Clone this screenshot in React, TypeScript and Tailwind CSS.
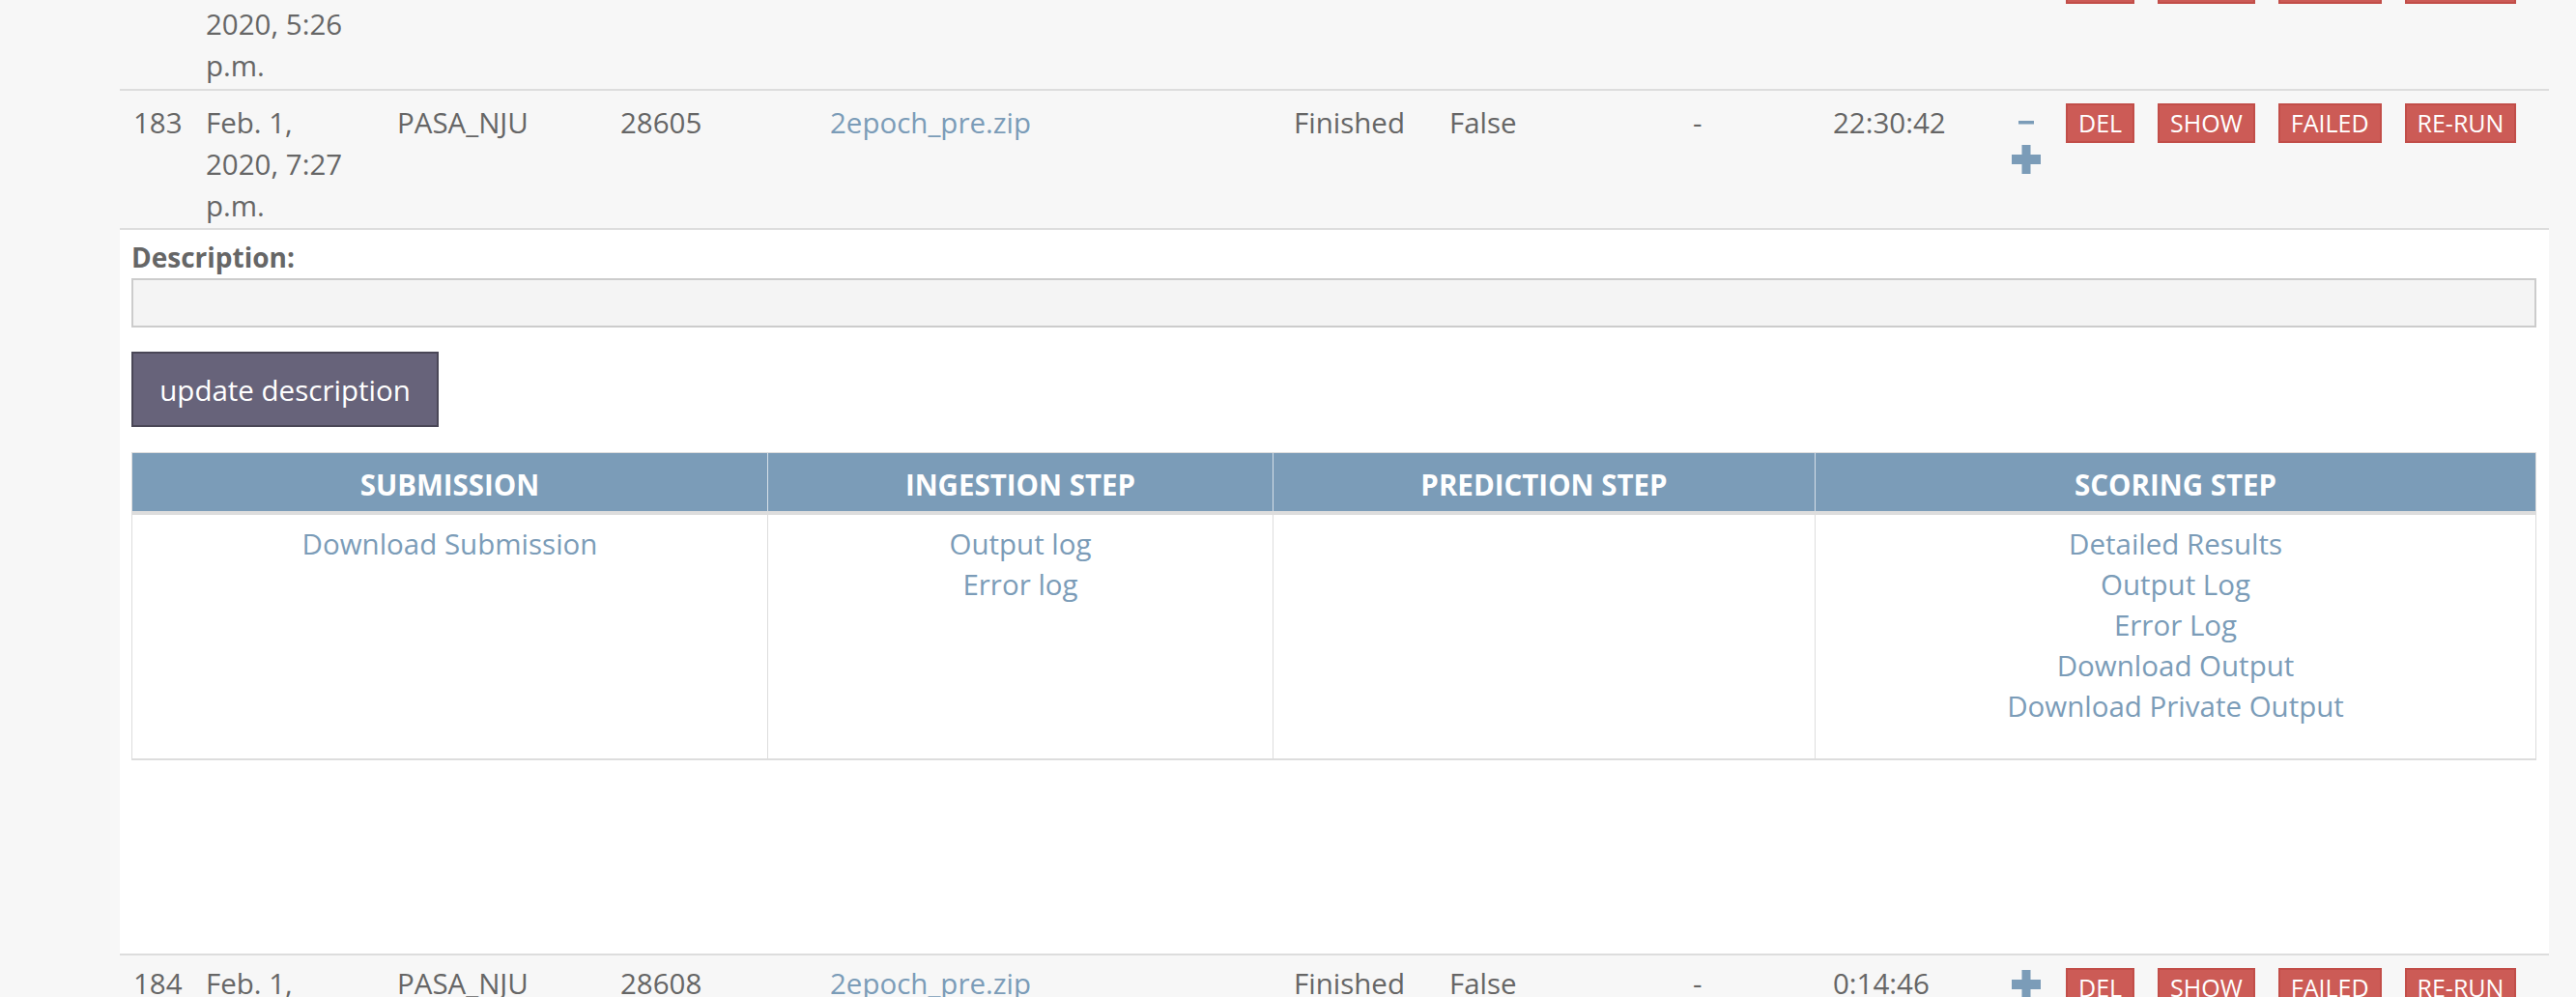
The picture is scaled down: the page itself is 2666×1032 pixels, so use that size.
import type { ReactNode } from "react";

interface SubmissionRowData {
  id: number;
  date: string;
  team: string;
  submissionId: string;
  file: string;
  status: string;
  isPublic: string;
  score: string;
  runtime: string;
}

const rowsData: SubmissionRowData[] = [
  {
    id: 182,
    date: "Feb. 1, 2020, 5:26 p.m.",
    team: "PASA_NJU",
    submissionId: "28598",
    file: "2epoch_pre.zip",
    status: "Finished",
    isPublic: "False",
    score: "-",
    runtime: "21:05:11",
  },
  {
    id: 183,
    date: "Feb. 1, 2020, 7:27 p.m.",
    team: "PASA_NJU",
    submissionId: "28605",
    file: "2epoch_pre.zip",
    status: "Finished",
    isPublic: "False",
    score: "-",
    runtime: "22:30:42",
  },
  {
    id: 184,
    date: "Feb. 1, 2020, 7:43 p.m.",
    team: "PASA_NJU",
    submissionId: "28608",
    file: "2epoch_pre.zip",
    status: "Finished",
    isPublic: "False",
    score: "-",
    runtime: "0:14:46",
  },
];

const actionButtons = ["DEL", "SHOW", "FAILED", "RE-RUN"];

const stepColumns: { title: string; width: string; links: string[] }[] = [
  { title: "Submission", width: "w-[657px]", links: ["Download Submission"] },
  { title: "Ingestion Step", width: "w-[523px]", links: ["Output log", "Error log"] },
  { title: "Prediction Step", width: "w-[561px]", links: [] },
  {
    title: "Scoring Step",
    width: "flex-1",
    links: ["Detailed Results", "Output Log", "Error Log", "Download Output", "Download Private Output"],
  },
];

function MinusIcon() {
  return (
    <svg width="16" height="4" viewBox="0 0 16 4" aria-hidden="true">
      <rect x="0" y="0" width="16" height="3.5" fill="#7b9cb8" />
    </svg>
  );
}

function PlusIcon() {
  return (
    <svg width="30" height="30" viewBox="0 0 30 30" aria-hidden="true">
      <rect x="10.5" y="0" width="9" height="30" fill="#7b9cb8" />
      <rect x="0" y="10" width="30" height="10" fill="#7b9cb8" />
    </svg>
  );
}

function Cell({ width, pt, children }: { width: string; pt: string; children: ReactNode }) {
  return <div className={`${width} ${pt} shrink-0 pl-[14px]`}>{children}</div>;
}

function SubmissionRow({
  row,
  expanded,
  textPt,
  plusPt,
  className = "",
}: {
  row: SubmissionRowData;
  expanded: boolean;
  textPt: string;
  plusPt: string;
  className?: string;
}) {
  return (
    <div className={`flex h-[144px] items-start border-t-2 border-[#dddddd] ${className}`}>
      <Cell width="w-[75px]" pt={textPt}>
        {row.id}
      </Cell>
      <div className={`w-[198px] shrink-0 pl-[14px] ${textPt}`}>
        <div className="w-[160px]">{row.date}</div>
      </div>
      <Cell width="w-[231px]" pt={textPt}>
        {row.team}
      </Cell>
      <Cell width="w-[217px]" pt={textPt}>
        {row.submissionId}
      </Cell>
      <Cell width="w-[480px]" pt={textPt}>
        <a className="text-[#7b9cb8]">{row.file}</a>
      </Cell>
      <Cell width="w-[161px]" pt={textPt}>
        {row.status}
      </Cell>
      <Cell width="w-[252px]" pt={textPt}>
        {row.isPublic}
      </Cell>
      <Cell width="w-[145px]" pt={textPt}>
        {row.score}
      </Cell>
      <Cell width="w-[191px]" pt={textPt}>
        {row.runtime}
      </Cell>
      <div className="flex w-[50px] shrink-0 flex-col items-start pl-[8px]">
        {expanded ? (
          <>
            <div className="box-content flex h-[43px] w-[30px] items-center justify-center pt-[11px]">
              <MinusIcon />
            </div>
            <div className="pt-[2px]">
              <PlusIcon />
            </div>
          </>
        ) : (
          <div className={plusPt}>
            <PlusIcon />
          </div>
        )}
      </div>
      <div className="flex shrink-0 gap-[24px] pl-[14px] pt-[13px]">
        {actionButtons.map((label) => (
          <button
            key={label}
            type="button"
            className="h-[41px] border-2 border-[#c24e49] bg-[#cc5b56] px-[11px] text-[25px] leading-[37px] text-white"
          >
            {label}
          </button>
        ))}
      </div>
    </div>
  );
}

function DetailPanel() {
  return (
    <div className="border-t-2 border-[#dddddd] bg-white pb-[200px] pl-[12px] pr-[13px] pt-[8px]">
      <div className="text-[28px] font-bold leading-[40px] text-[#666666]">Description:</div>
      <div className="mt-[2px] h-[51px] w-full border-2 border-[#cccccc] bg-[#f4f4f4]" />
      <button
        type="button"
        className="mt-[25px] h-[78px] w-[318px] border-2 border-[#4a4757] bg-[#67637a] text-[29.5px] text-white"
      >
        update description
      </button>

      <div className="mt-[26px] border border-b-2 border-[#dddddd]">
        <div className="flex h-[64px] border-b-4 border-[#dddddd] bg-[#7b9cb8]">
          {stepColumns.map((col, i) => (
            <div
              key={col.title}
              className={`${col.width} flex shrink-0 items-center justify-center pt-[4px] font-bold uppercase text-white ${
                i > 0 ? "border-l border-[#d5dfe8]" : ""
              }`}
            >
              {col.title}
            </div>
          ))}
        </div>
        <div className="flex h-[252px]">
          {stepColumns.map((col, i) => (
            <div
              key={col.title}
              className={`${col.width} flex shrink-0 flex-col items-center pt-[9px] leading-[42px] ${
                i > 0 ? "border-l border-[#dddddd]" : ""
              }`}
            >
              {col.links.map((link) => (
                <a key={link} className="text-[#7b9cb8]">
                  {link}
                </a>
              ))}
            </div>
          ))}
        </div>
      </div>
    </div>
  );
}

export default function App() {
  return (
    <div className="h-[1032px] overflow-hidden bg-[#f7f7f7] font-['Open_Sans',sans-serif] text-[29.5px] leading-[43px] text-[#666666]">
      <div className="ml-[124px] w-[2514px]">
        <SubmissionRow row={rowsData[0]} expanded={false} textPt="pt-[10px]" plusPt="pt-[15px]" className="-mt-[52px]" />
        <SubmissionRow row={rowsData[1]} expanded textPt="pt-[11px]" plusPt="pt-[15px]" />
        <DetailPanel />
        <SubmissionRow row={rowsData[2]} expanded={false} textPt="pt-[7px]" plusPt="pt-[15px]" />
      </div>
    </div>
  );
}
